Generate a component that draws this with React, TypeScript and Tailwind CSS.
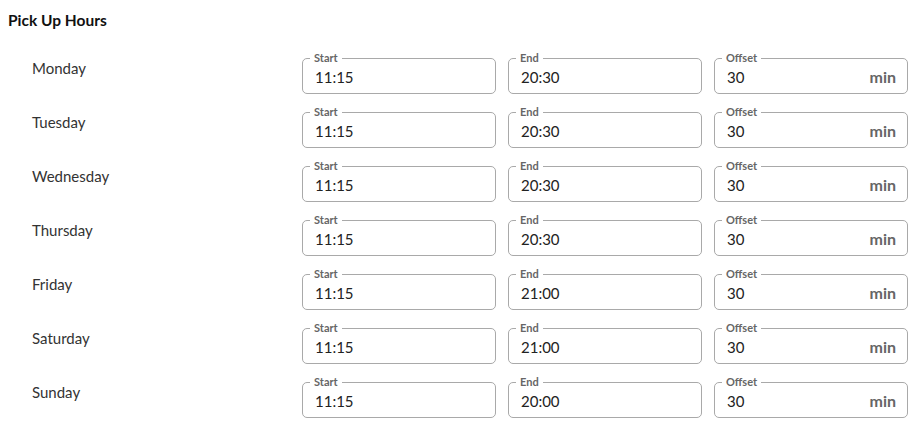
import React from "react";

const days = [
  { day: "Monday", start: "11:15", end: "20:30", offset: "30" },
  { day: "Tuesday", start: "11:15", end: "20:30", offset: "30" },
  { day: "Wednesday", start: "11:15", end: "20:30", offset: "30" },
  { day: "Thursday", start: "11:15", end: "20:30", offset: "30" },
  { day: "Friday", start: "11:15", end: "21:00", offset: "30" },
  { day: "Saturday", start: "11:15", end: "21:00", offset: "30" },
  { day: "Sunday", start: "11:15", end: "20:00", offset: "30" },
];

function Field({ label, value, suffix }: { label: string; value: string; suffix?: string }) {
  return (
    <div className="relative mt-[6px] h-[36px] rounded-[5px] border border-[#a9a9a9]">
      <span className="absolute -top-[8px] left-[7px] bg-white px-[4px] text-[11px] font-bold leading-[14px] text-[#666]">
        {label}
      </span>
      <div className="flex h-full items-baseline justify-between pl-[12px] pr-[11px] pt-[8px]">
        <span className="text-[15px] leading-[20px] text-[#222]">{value}</span>
        {suffix && <span className="text-[16px] font-bold leading-[20px] text-[#666]">{suffix}</span>}
      </div>
    </div>
  );
}

export default function App() {
  return (
    <div
      className="w-[918px] h-[422px] bg-white px-[8px] pt-[10px]"
      style={{ fontFamily: "Lato, 'Open Sans', sans-serif" }}
    >
      <div className="text-[15.5px] font-bold leading-[20px] text-[#111]">Pick Up Hours</div>
      <div className="mt-[22px] flex flex-col gap-[12px]">
        {days.map((d) => (
          <div key={d.day} className="flex">
            <div className="w-[294px] pl-[24px] pt-[6px] text-[15px] leading-[20px] text-[#333]">{d.day}</div>
            <div className="grid w-[606px] grid-cols-3 gap-[12px]">
              <Field label="Start" value={d.start} />
              <Field label="End" value={d.end} />
              <Field label="Offset" value={d.offset} suffix="min" />
            </div>
          </div>
        ))}
      </div>
    </div>
  );
}
